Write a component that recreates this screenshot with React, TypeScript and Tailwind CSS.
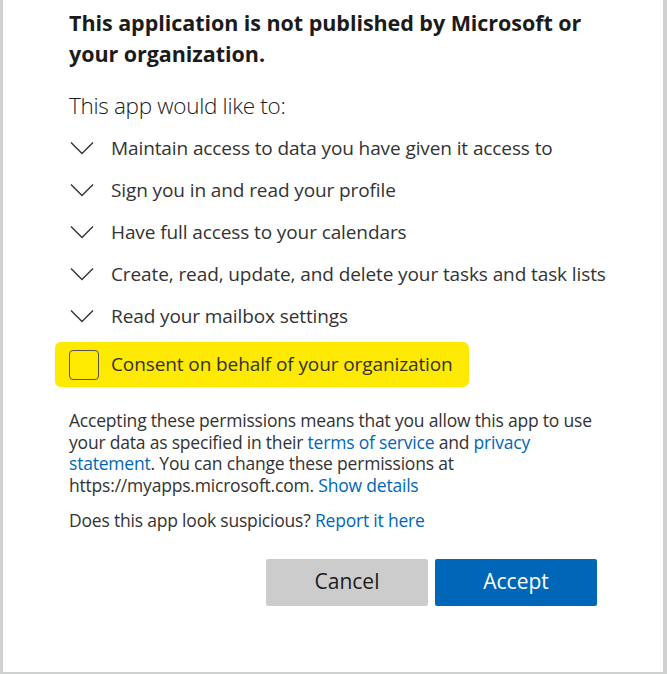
const permissions = [
  'Maintain access to data you have given it access to',
  'Sign you in and read your profile',
  'Have full access to your calendars',
  'Create, read, update, and delete your tasks and task lists',
  'Read your mailbox settings',
];

function Chevron() {
  return (
    <svg width="24" height="14" viewBox="0 0 24 14" fill="none" className="shrink-0">
      <path d="M1 1.5 L12 12.5 L23 1.5" stroke="#333" strokeWidth="1.4" />
    </svg>
  );
}

export default function App() {
  return (
    <div className="h-[674px] w-[667px] overflow-hidden bg-[#cfd1d1]" style={{ fontFamily: '"Open Sans", "Noto Sans", sans-serif' }}>
      <div className="ml-[3px] h-[672px] w-[660px] bg-white pl-[66px] pr-[40px] pt-[7px] text-[#1b1b1b]">
        <h1 className="w-[530px] text-[21.5px] font-bold leading-[31px] tracking-[-0.05px]">
          This application is not published by Microsoft or your organization.
        </h1>
        <p className="mt-[23px] text-[22.5px] font-light leading-[28px] tracking-[-0.3px]">This app would like to:</p>

        <ul className="mt-[16px] flex flex-col gap-[18px]">
          {permissions.map((p) => (
            <li key={p} className="flex h-[24px] items-center gap-[17px]">
              <span className="ml-[1px]"><Chevron /></span>
              <span className="text-[19px] tracking-[-0.1px] text-[#333]">{p}</span>
            </li>
          ))}
        </ul>

        <div className="-ml-[14px] mt-[14px] flex h-[45px] w-[414px] items-center gap-[12px] rounded-[6px] bg-[#fee900] pl-[14px]">
          <span className="h-[30px] w-[30px] rounded-[4px] border border-[#555]"></span>
          <span className="text-[19px] tracking-[-0.1px] text-[#333]">Consent on behalf of your organization</span>
        </div>

        <p className="mt-[23px] w-[540px] text-[17.5px] leading-[21.5px] tracking-[-0.2px] text-[#333]">
          Accepting these permissions means that you allow this app to use your data as specified in their{' '}
          <a className="text-[#0067b8]">terms of service</a> and <a className="text-[#0067b8]">privacy</a>{' '}
          <a className="text-[#0067b8]">statement</a>. You can change these permissions at https://myapps.microsoft.com.{' '}
          <a className="text-[#0067b8]">Show details</a>
        </p>

        <p className="mt-[14px] text-[17.5px] leading-[21.5px] tracking-[-0.2px] text-[#333]">
          Does this app look suspicious? <a className="text-[#0067b8]">Report it here</a>
        </p>

        <div className="mt-[27px] flex w-[528px] justify-end gap-[7px]">
          <button className="h-[47px] w-[162px] rounded-[2px] bg-[#cccccc] text-[21px] text-[#1b1b1b]">Cancel</button>
          <button className="h-[47px] w-[162px] rounded-[2px] bg-[#0067b8] text-[21px] text-white">Accept</button>
        </div>
      </div>
    </div>
  );
}
